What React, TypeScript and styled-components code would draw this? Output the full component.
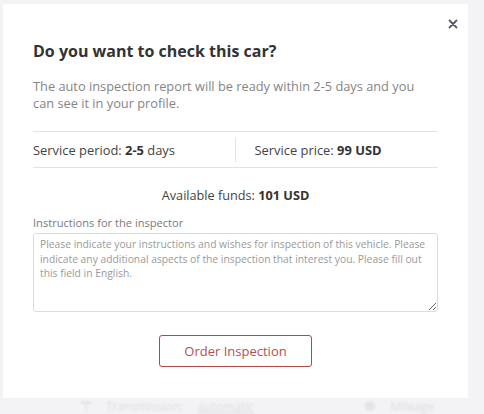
import styled, { createGlobalStyle } from "styled-components";

const GlobalStyle = createGlobalStyle`
  html, body {
    margin: 0;
    padding: 0;
  }
  body {
    font-family: "Open Sans", "Liberation Sans", sans-serif;
    background: #f3f3f5;
  }
  * {
    box-sizing: border-box;
  }
`;

const Page = styled.div`
  width: 484px;
  height: 414px;
  overflow: hidden;
  background: #f3f3f5;
  padding: 4px 16px 0 3px;
`;

const Modal = styled.div`
  position: relative;
  width: 465px;
  height: 394px;
  background: #ffffff;
  padding: 36px 30px 0 30px;
  display: flex;
  flex-direction: column;
`;

const Close = styled.button`
  position: absolute;
  top: 13px;
  right: 8px;
  width: 14px;
  height: 14px;
  padding: 0;
  border: none;
  background: none;
  display: flex;
  align-items: center;
  justify-content: center;
  cursor: pointer;
`;

const Title = styled.h2`
  margin: 0;
  font-size: 16px;
  font-weight: 700;
  color: #333333;
  line-height: 22px;
`;

const Lead = styled.p`
  margin: 16px 0 0;
  font-size: 12.8px;
  line-height: 17px;
  color: #858585;
  padding-right: 20px;
`;

const InfoRow = styled.div`
  margin-top: 19px;
  display: flex;
  align-items: center;
  height: 37px;
  border-top: 1px solid #e3e3e3;
  border-bottom: 1px solid #e3e3e3;
`;

const InfoCell = styled.div<{ $first?: boolean }>`
  flex: 0 0 50%;
  font-size: 12.9px;
  color: #444444;
  padding-left: ${(p) => (p.$first ? "0" : "19px")};
  border-right: ${(p) => (p.$first ? "1px solid #e3e3e3" : "none")};
  line-height: 24px;

  b {
    font-weight: 700;
    color: #333333;
  }
`;

const Funds = styled.div`
  margin-top: 18px;
  text-align: center;
  font-size: 12.7px;
  color: #444444;

  b {
    font-weight: 700;
    color: #333333;
  }
`;

const Label = styled.label`
  display: block;
  margin-top: 12px;
  font-size: 11.1px;
  color: #7a7a7a;
  line-height: 14px;
`;

const Notes = styled.textarea`
  margin-top: 3px;
  width: 100%;
  height: 79px;
  border: 1px solid #dcdcdc;
  border-radius: 3px;
  padding: 3px 6px;
  font-family: inherit;
  font-size: 10.3px;
  line-height: 14.5px;
  color: #555555;
  resize: vertical;

  &::placeholder {
    color: #9a9a9a;
  }
`;

const Actions = styled.div`
  display: flex;
  justify-content: center;
  margin-top: 23px;
`;

const OrderButton = styled.button`
  width: 153px;
  height: 32px;
  background: #ffffff;
  border: 1px solid #b04848;
  border-radius: 3px;
  color: #b5504e;
  font-family: inherit;
  font-size: 13px;
  cursor: pointer;
`;

const Behind = styled.div`
  display: flex;
  align-items: center;
  height: 16px;
  padding: 0 34px 0 77px;
  opacity: 0.25;
  filter: blur(0.9px);
  font-size: 12px;
  color: #999999;
  gap: 14px;
`;

const Faint = styled.span<{ $underline?: boolean }>`
  text-decoration: ${(p) => (p.$underline ? "underline" : "none")};
`;

const Spacer = styled.div`
  flex: 1;
`;

export default function App() {
  return (
    <>
      <GlobalStyle />
      <Page>
        <Modal>
          <Close aria-label="close">
            <svg width="10" height="10" viewBox="0 0 10 10">
              <path d="M1.5 1.5 L8.5 8.5 M8.5 1.5 L1.5 8.5" stroke="#555a66" strokeWidth="1.8" strokeLinecap="round" />
            </svg>
          </Close>
          <Title>Do you want to check this car?</Title>
          <Lead>
            The auto inspection report will be ready within 2-5 days and you can see it in your profile.
          </Lead>
          <InfoRow>
            <InfoCell $first>
              Service period: <b>2-5</b> days
            </InfoCell>
            <InfoCell>
              Service price: <b>99 USD</b>
            </InfoCell>
          </InfoRow>
          <Funds>
            Available funds: <b>101 USD</b>
          </Funds>
          <Label htmlFor="notes">Instructions for the inspector</Label>
          <Notes
            id="notes"
            placeholder="Please indicate your instructions and wishes for inspection of this vehicle. Please indicate any additional aspects of the inspection that interest you. Please fill out this field in English."
          />
          <Actions>
            <OrderButton>Order Inspection</OrderButton>
          </Actions>
        </Modal>
        <Behind>
          <svg width="12" height="12" viewBox="0 0 12 12">
            <rect x="1" y="1" width="10" height="3" fill="#bbb" />
            <rect x="5" y="4" width="2" height="7" fill="#bbb" />
          </svg>
          <Faint>Transmission:</Faint>
          <Faint $underline>automatic</Faint>
          <Spacer />
          <svg width="12" height="12" viewBox="0 0 12 12">
            <circle cx="6" cy="6" r="5" fill="#bbb" />
          </svg>
          <Faint>Mileage</Faint>
        </Behind>
      </Page>
    </>
  );
}
